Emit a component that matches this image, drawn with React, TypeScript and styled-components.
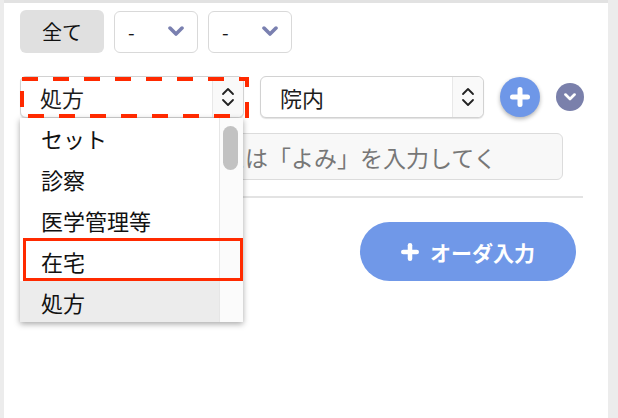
import React from "react";
import styled, {createGlobalStyle} from "styled-components";

const GlobalStyle = createGlobalStyle`
  html, body {
    margin: 0;
    padding: 0;
    background: #ececec;
  }
  body {
    font-family: "Noto Sans CJK JP", "Noto Sans", sans-serif;
    color: #1a1a1a;
  }
`

const Panel = styled.div`
  position: relative;
  box-sizing: border-box;
  margin-left: 4px;
  width: 604px;
  height: 418px;
  background: #fff;
  border-top: 3px solid #e2e2e2;
  padding: 7px 0 0 16px;
`

const Toolbar = styled.div`
  display: flex;
  gap: 10px;
  align-items: center;
`

const AllButton = styled.button`
  width: 84px;
  height: 43px;
  border: none;
  border-radius: 6px;
  background: #e0e0e0;
  font-family: inherit;
  font-size: 20px;
  color: #111;
  padding: 0;
`

const MiniSelect = styled.div`
  box-sizing: border-box;
  width: 84px;
  height: 42px;
  border: 1px solid #d9d9d9;
  border-radius: 6px;
  display: flex;
  align-items: center;
  justify-content: space-between;
  padding: 0 13px 0 13px;
  font-size: 19px;
`

const OrderRow = styled.div`
  display: flex;
  align-items: center;
  gap: 16px;
  margin-top: 23px;
  height: 42px;
`

const SelectBox = styled.div`
  position: relative;
  box-sizing: border-box;
  width: 224px;
  height: 42px;
  border: 1px solid #d2d2d2;
  border-radius: 6px;
  background: #fff;
  box-shadow: 0 1px 1px rgba(0, 0, 0, 0.12);
  display: flex;
  align-items: center;
`

const SelectLabel = styled.span`
  flex: 1;
  padding-left: 19px;
  font-size: 22px;
  color: #1c1c1c;
`

const Stepper = styled.span`
  align-self: stretch;
  width: 30px;
  border-left: 1px solid #e8e8e8;
  background: #f9f9f9;
  border-radius: 0 6px 6px 0;
  display: flex;
  align-items: center;
  justify-content: center;
`

const DashedMark = styled.svg`
  position: absolute;
  left: -1px;
  top: 0;
  width: 229px;
  height: 41px;
  overflow: visible;
  pointer-events: none;
  z-index: 3;
`

const RoundButton = styled.span<{ $size: number; $bg: string; $shadow?: boolean }>`
  width: ${p => p.$size}px;
  height: ${p => p.$size}px;
  border-radius: 50%;
  background: ${p => p.$bg};
  display: flex;
  align-items: center;
  justify-content: center;
  flex: none;
  box-shadow: ${p => p.$shadow ? "0 2px 4px rgba(0,0,0,0.3)" : "none"};
`

const Dropdown = styled.div`
  position: absolute;
  top: 41px;
  left: -1px;
  width: 223px;
  height: 204px;
  background: #fff;
  box-shadow: 0 2px 6px rgba(0, 0, 0, 0.35);
  display: flex;
  z-index: 2;
  overflow: hidden;
`

const OptionList = styled.div`
  flex: 1;
  display: flex;
  flex-direction: column;
`

const Option = styled.div<{ $active?: boolean }>`
  height: 41px;
  display: flex;
  align-items: center;
  padding-left: 21px;
  font-size: 22px;
  color: #111;
  background: ${p => p.$active ? "#ececec" : "transparent"};
`

const ScrollTrack = styled.div`
  width: 24px;
  border-left: 1px solid #e6e6e6;
  background: #fbfbfb;
  padding: 8px 0 0 3px;
  box-sizing: border-box;
`

const ScrollThumb = styled.div`
  width: 15px;
  height: 44px;
  border-radius: 8px;
  background: #c2c2c2;
`

const HighlightBox = styled.div`
  position: absolute;
  left: 3px;
  top: 120px;
  width: 220px;
  height: 43px;
  box-sizing: border-box;
  border: 3.5px solid #ff2a00;
  pointer-events: none;
`

const SearchInput = styled.input`
  display: block;
  box-sizing: border-box;
  margin-top: 15px;
  width: 543px;
  height: 47px;
  border: 1px solid #dcdcdc;
  border-radius: 6px;
  background: #f8f8f8;
  padding: 0 66px 0 17px;
  font-family: inherit;
  font-size: 23px;
  outline: none;
  &::placeholder {
    color: #777;
  }
`

const Divider = styled.div`
  margin-top: 16px;
  width: 563px;
  height: 2px;
  background: #e3e3e3;
`

const ActionRow = styled.div`
  display: flex;
  justify-content: flex-end;
  width: 556px;
  margin-top: 24px;
`

const OrderButton = styled.button`
  width: 216px;
  height: 59px;
  border: none;
  border-radius: 30px;
  background: #7098e8;
  color: #fff;
  font-family: inherit;
  font-size: 21px;
  font-weight: 700;
  display: flex;
  align-items: center;
  justify-content: center;
  gap: 11px;
  padding: 0;
`

const Chevron = ({color = "#7a80b0", w = 16}: { color?: string; w?: number }) => (
    <svg width={w} height={w * 0.7} viewBox="0 0 16 11">
        <polyline points="2,2 8,8 14,2" fill="none" stroke={color} strokeWidth="3.6" strokeLinecap="round" strokeLinejoin="round"/>
    </svg>
)

const UpDown = () => (
    <svg width="14" height="22" viewBox="0 0 14 22">
        <polyline points="2,8 7,3 12,8" fill="none" stroke="#222" strokeWidth="1.8" strokeLinecap="round" strokeLinejoin="round"/>
        <polyline points="2,14 7,19 12,14" fill="none" stroke="#222" strokeWidth="1.8" strokeLinecap="round" strokeLinejoin="round"/>
    </svg>
)

const Plus = ({size, stroke}: { size: number; stroke: number }) => (
    <svg width={size} height={size} viewBox={`0 0 ${size} ${size}`}>
        <line x1={size / 2} y1={stroke / 2} x2={size / 2} y2={size - stroke / 2} stroke="#fff" strokeWidth={stroke} strokeLinecap="round"/>
        <line x1={stroke / 2} y1={size / 2} x2={size - stroke / 2} y2={size / 2} stroke="#fff" strokeWidth={stroke} strokeLinecap="round"/>
    </svg>
)

const options = ["セット", "診察", "医学管理等", "在宅", "処方"]

const App = () => {
    return <>
        <GlobalStyle/>
        <Panel>
            <Toolbar>
                <AllButton>全て</AllButton>
                <MiniSelect><span>-</span><Chevron/></MiniSelect>
                <MiniSelect><span>-</span><Chevron/></MiniSelect>
            </Toolbar>

            <OrderRow>
                <SelectBox>
                    <SelectLabel>処方</SelectLabel>
                    <Stepper><UpDown/></Stepper>
                    <DashedMark viewBox="0 0 229 41">
                        <rect x="2" y="2" width="225" height="37" fill="none" stroke="#ff2a00" strokeWidth="4" strokeDasharray="16 15"/>
                    </DashedMark>
                    <Dropdown>
                        <OptionList>
                            {options.map((o, i) => <Option key={o} $active={i === options.length - 1}>{o}</Option>)}
                        </OptionList>
                        <ScrollTrack><ScrollThumb/></ScrollTrack>
                        <HighlightBox/>
                    </Dropdown>
                </SelectBox>
                <SelectBox>
                    <SelectLabel>院内</SelectLabel>
                    <Stepper><UpDown/></Stepper>
                </SelectBox>
                <RoundButton $size={40} $bg="#6e97e8" $shadow><Plus size={20} stroke={5}/></RoundButton>
                <RoundButton $size={28} $bg="#7a80ab"><Chevron color="#fff" w={12}/></RoundButton>
            </OrderRow>

            <SearchInput placeholder="項目名、コードまたは「よみ」を入力してください"/>
            <Divider/>
            <ActionRow>
                <OrderButton><Plus size={18} stroke={4.5}/>オーダ入力</OrderButton>
            </ActionRow>
        </Panel>
    </>
}

export default App
